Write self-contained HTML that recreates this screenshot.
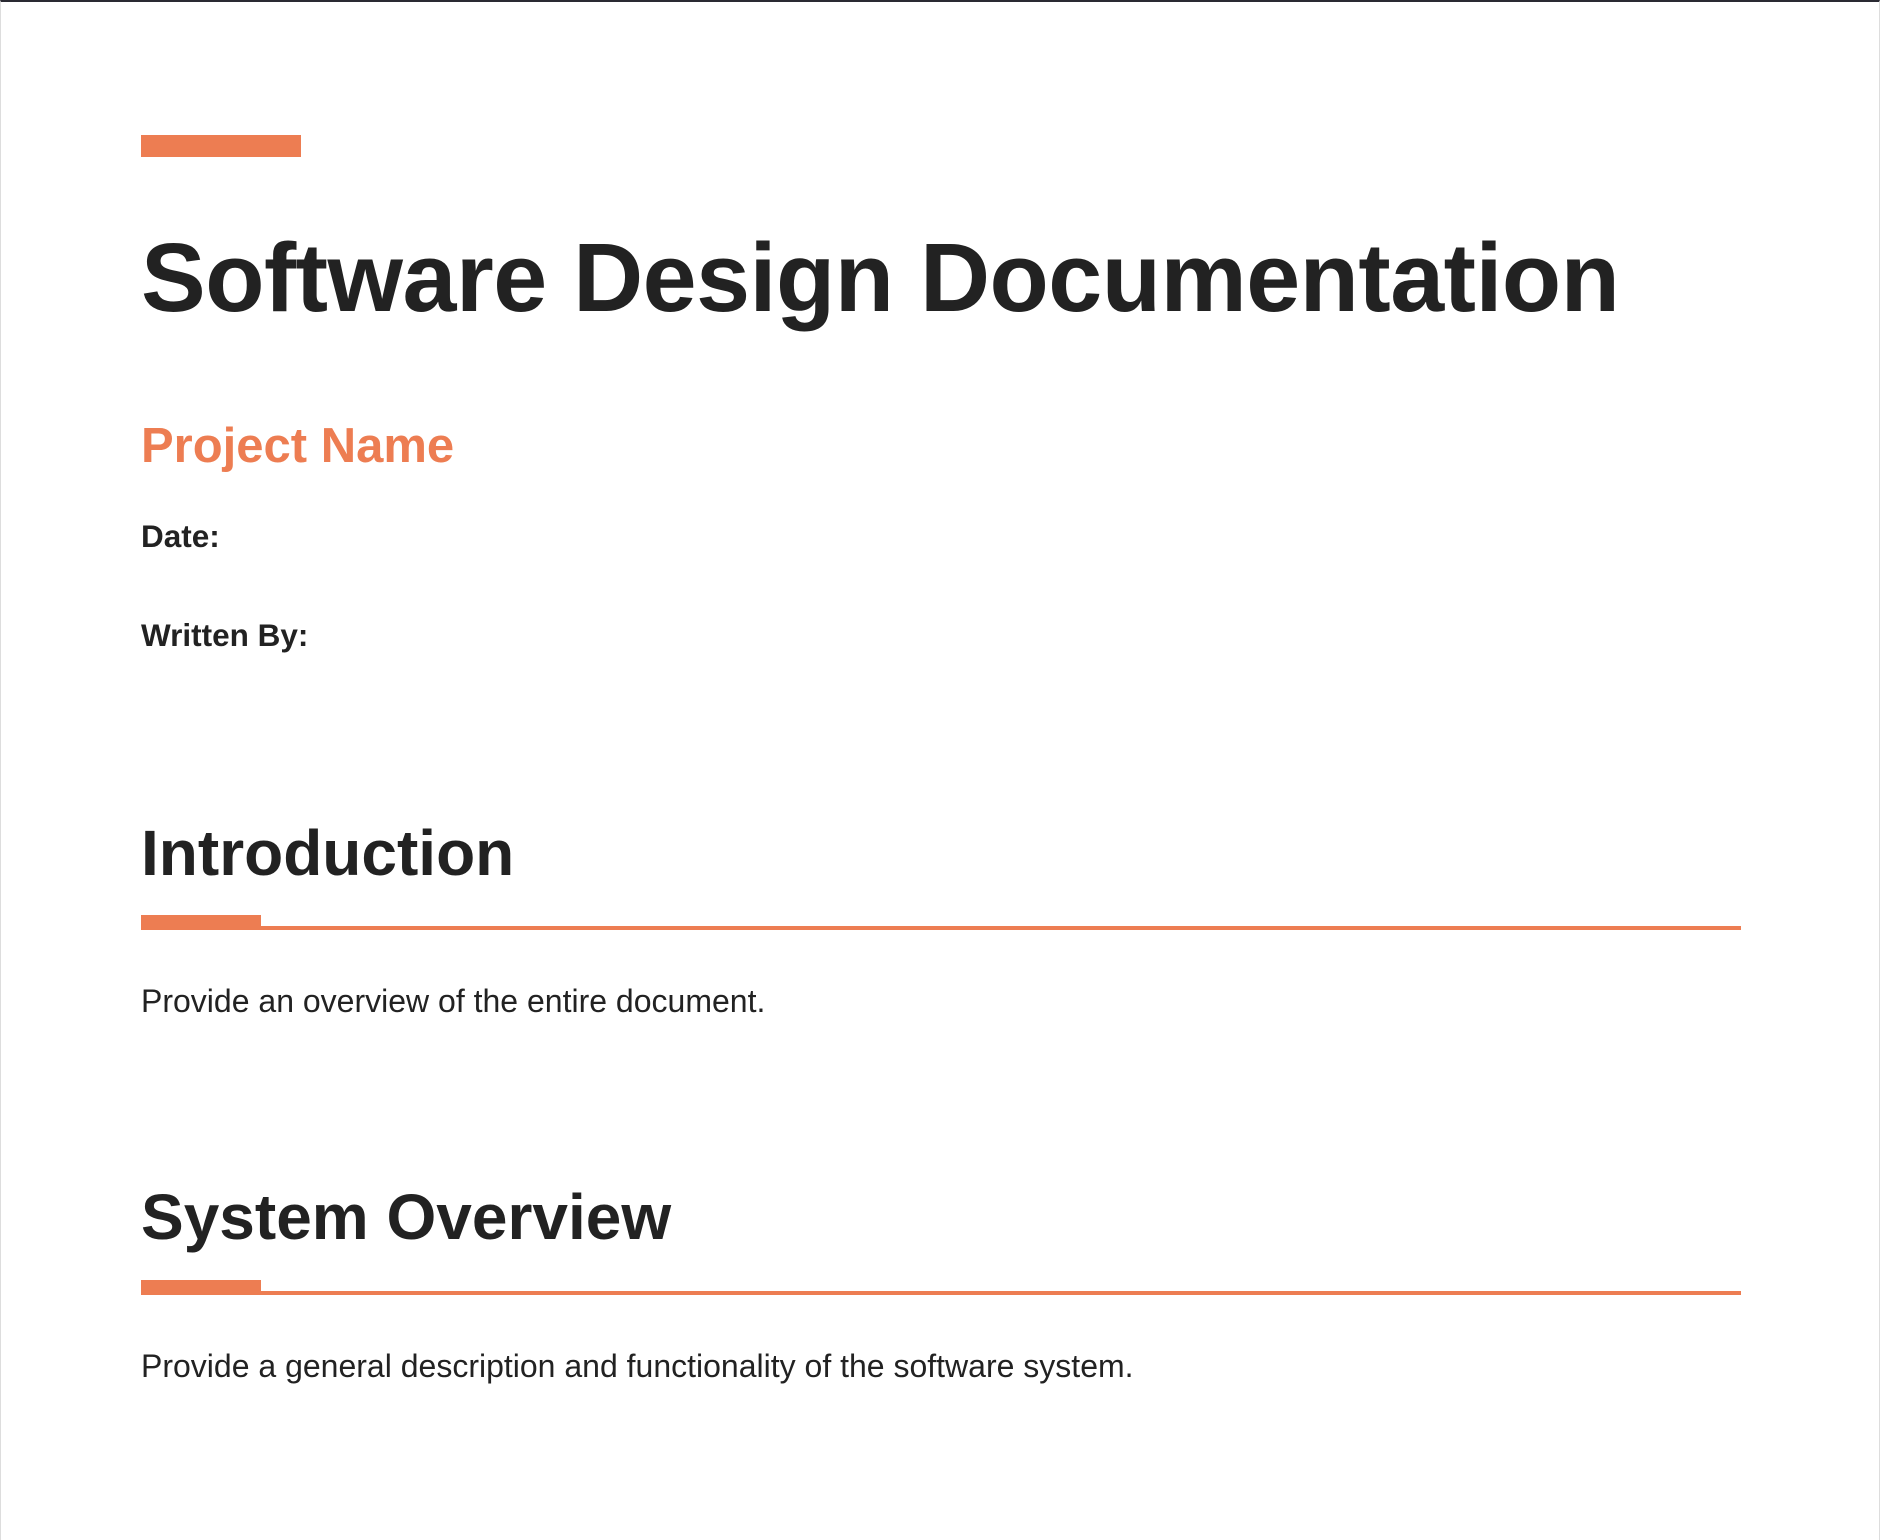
<!DOCTYPE html>
<html><head><meta charset="utf-8"><style>
html,body{margin:0;padding:0;background:#fff;}
body{width:1884px;height:1538px;position:relative;overflow:hidden;font-family:"Liberation Sans",Arial,sans-serif;color:#222;}
.frame{position:absolute;left:0;top:0;width:1880px;height:1540px;border-top:2px solid #2a2a33;border-left:1px solid #ddd;border-right:1px solid #ddd;box-sizing:border-box;}
.t{position:absolute;left:141px;white-space:nowrap;line-height:1;margin:0;}
.b{position:absolute;background:#ED7D52;}
</style></head><body>
<div class="frame"></div>
<div class="b" style="left:141px;top:135px;width:160px;height:22px"></div>
<h1 class="t" style="top:229px;font-size:97px;font-weight:bold;letter-spacing:-0.5px">Software Design Documentation</h1>
<div class="t" style="top:422px;font-size:49px;font-weight:bold;color:#ED7D52">Project Name</div>
<div class="t" style="top:521px;font-size:31.5px;font-weight:bold">Date:</div>
<div class="t" style="top:620px;font-size:31.5px;font-weight:bold">Written By:</div>
<h2 class="t" style="top:821px;font-size:64px;font-weight:bold">Introduction</h2>
<div class="b" style="left:141px;top:915px;width:120px;height:15px"></div>
<div class="b" style="left:141px;top:926px;width:1600px;height:4px"></div>
<p class="t" style="top:985px;font-size:32px">Provide an overview of the entire document.</p>
<h2 class="t" style="top:1185px;font-size:64px;font-weight:bold">System Overview</h2>
<div class="b" style="left:141px;top:1280px;width:120px;height:15px"></div>
<div class="b" style="left:141px;top:1291px;width:1600px;height:4px"></div>
<p class="t" style="top:1350px;font-size:32px">Provide a general description and functionality of the software system.</p>
</body></html>
